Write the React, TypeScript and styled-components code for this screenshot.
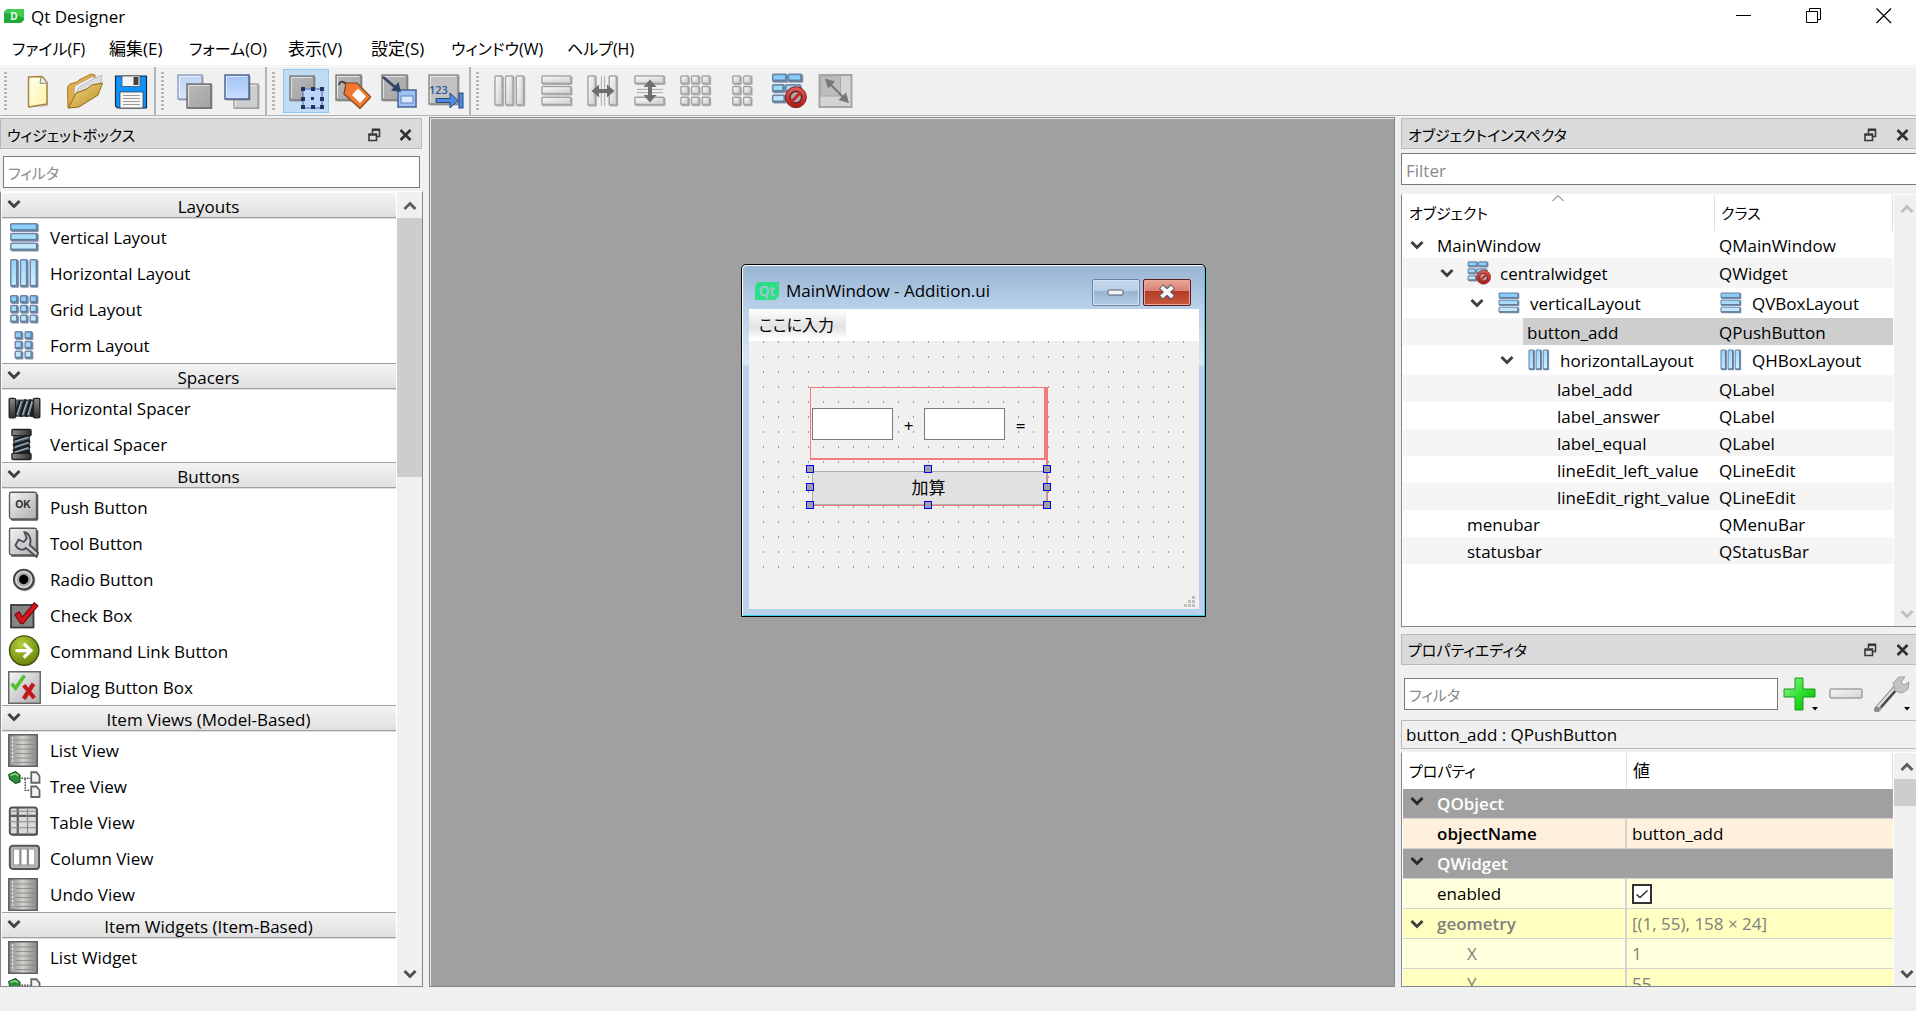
import React from 'react';
import styled, { createGlobalStyle, css } from 'styled-components';

const GlobalStyle = createGlobalStyle`
  *, *::before, *::after { box-sizing: border-box; }
  body { margin: 0; background: #f0f0f0; }
  body, button, input, table {
    font-family: "Open Sans", "Noto Sans CJK JP", sans-serif;
    font-size: 17px;
    line-height: 24px;
    font-feature-settings: "palt";
    color: #000;
  }
  button { border: 0; padding: 0; background: none; }
  ul { list-style: none; margin: 0; padding: 0; }
  svg { display: block; flex: none; }
`;

/* ---------- Shell ---------- */

const Page = styled.div`
  display: flex;
  flex-direction: column;
  height: 100vh;
  overflow: hidden;
`;

const TitleBar = styled.header`
  display: flex;
  align-items: center;
  height: 32px;
  padding: 0 24px 0 4px;
  background: #fff;
`;

const AppTitle = styled.h1`
  flex: 1;
  margin: 0 0 0 7px;
  padding-top: 2px;
  font-size: 17px;
  font-weight: 400;
`;

const WindowButtons = styled.div`
  display: flex;
  gap: 54px;
`;

const MenuBar = styled.nav`
  display: flex;
  height: 34px;
  padding: 1px 0 0 12px;
  gap: 26px;
  background: #fff;
  border-bottom: 1px solid #f0f0f0;
`;

const MenuItem = styled.button<{ $w: number; $kana?: boolean }>`
  width: ${p => p.$w}px;
  text-align: left;
  white-space: nowrap;
  font-size: ${p => (p.$kana ? 16 : 17)}px;
`;

const ToolBars = styled.div`
  display: flex;
  height: 50px;
  border-bottom: 1px solid #b4b4b4;
  border-top: 1px solid #fff;
`;

const ToolBar = styled.div<{ $last?: boolean }>`
  display: flex;
  align-items: center;
  padding-left: 4px;
  ${p => !p.$last && css`
    border-right: 2px solid #b4b4b4;
    margin-right: 1px;
  `}
`;

const Grip = styled.span`
  width: 3px;
  height: 39px;
  margin-right: 8px;
  background: repeating-linear-gradient(#b4b4b4 0 2px, transparent 2px 4px);
`;

const ToolRow = styled.div<{ $w: number }>`
  display: flex;
  justify-content: space-between;
  width: ${p => p.$w}px;
`;

const ToolButton = styled.button<{ $on?: boolean }>`
  display: grid;
  place-items: center;
  width: 46px;
  height: 44px;
  border: 1px solid ${p => (p.$on ? '#90c8f6' : 'transparent')};
  background: ${p => (p.$on ? '#c0dcf3' : 'transparent')};
`;

const Workspace = styled.main`
  flex: 1;
  min-height: 0;
  display: grid;
  grid-template-columns: 423px minmax(0, 1fr) 515px;
  gap: 6px;
  padding-top: 1px;
`;

const StatusBar = styled.footer`
  height: 24px;
`;

/* ---------- Docks ---------- */

const Dock = styled.section<{ $grow?: number }>`
  display: flex;
  flex-direction: column;
  min-height: 0;
  flex: ${p => p.$grow ?? 1} 1 0;
  padding-top: 1px;
`;

const RightColumn = styled.div`
  display: flex;
  flex-direction: column;
  gap: 6px;
  min-height: 0;
`;

const DockTitle = styled.div<{ $open?: boolean }>`
  display: flex;
  align-items: center;
  flex: none;
  height: 31px;
  padding: 0 ${p => (p.$open ? 7 : 9)}px 0 6px;
  margin-right: ${p => (p.$open ? 0 : 1)}px;
  border: 1px solid #b9b9b9;
  border-right-width: ${p => (p.$open ? 0 : 1)}px;
  background: #dadada;
`;

const DockName = styled.h2`
  flex: 1;
  margin: 0;
  padding-top: 2px;
  font-size: 15px;
  font-weight: 400;
`;

const DockButtons = styled.div<{ $gap: number }>`
  display: flex;
  gap: ${p => p.$gap}px;
  padding-top: 2px;
`;

const Filter = styled.input<{ $kana?: boolean }>`
  height: 32px;
  min-width: 0;
  flex: none;
  padding: 2px 4px 0;
  border: 1px solid #7a7a7a;
  border-radius: 0;
  outline: 0;
  background: #fff;
  font-size: ${p => (p.$kana ? 15 : 17)}px;
  &::placeholder { color: #8a8a8a; opacity: 1; }
`;

const WidgetFilter = styled(Filter)`
  margin: 7px 3px 3px;
`;

const ObjectFilter = styled(Filter)`
  margin: 4px 0 9px;
  border-right: 0;
`;

const Frame = styled.div<{ $open?: boolean }>`
  display: flex;
  flex: 1;
  min-height: 0;
  overflow: hidden;
  border: 1px solid #828790;
  border-top-color: #fff;
  border-right-width: ${p => (p.$open ? 0 : 1)}px;
  background: #fff;
`;

const FrameBody = styled.div`
  flex: 1;
  min-width: 0;
  min-height: 0;
  overflow: hidden;
  padding-left: 1px;
`;

const ScrollTrack = styled.div<{ $open?: boolean }>`
  display: flex;
  flex-direction: column;
  align-items: center;
  flex: none;
  width: 25px;
  margin-left: 1px;
  margin-right: ${p => (p.$open ? -3 : 0)}px;
  background: #f0f0f0;
`;

const ScrollButton = styled.button`
  display: grid;
  place-items: center;
  width: 100%;
  height: 26px;
  padding-top: 2px;
`;

const ScrollThumb = styled.div<{ $h: number }>`
  width: 100%;
  height: ${p => p.$h}px;
  background: #cdcdcd;
`;

const Spring = styled.div`
  flex: 1;
`;

/* ---------- Widget box ---------- */

const CategoryHead = styled.button`
  display: flex;
  align-items: flex-start;
  width: 100%;
  height: 26px;
  margin-bottom: 1px;
  padding: 2px 0 0 5px;
  border-top: 1px solid #a0a0a0;
  border-bottom: 1px solid #a0a0a0;
  box-shadow: 0 1px 0 #dedede;
  background: linear-gradient(#f4f4f4, #e0e0e0);
  svg { margin-top: 4px; }
  li:first-child > & { border-top-color: #fff; }
`;

const CategoryName = styled.span`
  flex: 1;
  text-align: center;
`;

const WidgetItem = styled.li`
  display: flex;
  align-items: center;
  gap: 9px;
  height: 36px;
  padding-left: 6px;
`;

const ItemName = styled.span`
  padding-top: 2px;
`;

/* ---------- Form editor ---------- */

const MdiArea = styled.section`
  position: relative;
  overflow: hidden;
  border: 1px solid #828790;
  background: #a0a0a0;
  box-shadow: inset 1px 1px 0 #e8e8e8;
`;

const FormWindow = styled.article`
  position: absolute;
  left: 311px;
  top: 146px;
  width: 465px;
  display: flex;
  flex-direction: column;
  padding: 0 6px 7px 7px;
  border: 1px solid #000;
  border-radius: 5px 5px 0 0;
  background: linear-gradient(#98b4d2 0, #b9d1ea 44px, #dae8f5 100px, #b9d1ea 101px);
  box-shadow: inset 1px 1px 0 #fff, inset -1px -1px 0 #35d0e8;
`;

const FormTitle = styled.div`
  display: flex;
  align-items: center;
  gap: 3px;
  height: 44px;
  padding: 8px 8px 0 6px;
`;

const FormName = styled.h3`
  flex: 1;
  margin: 0 0 0 4px;
  font-size: 17px;
  font-weight: 400;
`;

const CaptionButton = styled.button<{ $close?: boolean }>`
  display: grid;
  place-items: center;
  width: 48px;
  height: 27px;
  margin-top: 2px;
  border: 1px solid ${p => (p.$close ? '#5c1a22' : '#6a84a4')};
  border-radius: 2px;
  box-shadow: inset 0 0 0 1px ${p => (p.$close ? '#e9a99c' : '#d5e3f2')};
  background: ${p => (p.$close
    ? 'linear-gradient(#e8a598 0, #d98072 45%, #b53a25 46%, #c65a40 100%)'
    : 'linear-gradient(#c3d6ec 0, #b9cfe7 45%, #98b3d1 46%, #b4cbe4 100%)')};
`;

const FormMenu = styled.div`
  height: 32px;
  background: #fff;
`;

const TypeHere = styled.button`
  width: 97px;
  height: 30px;
  padding: 2px 2px 0 0;
  font-size: 16px;
  background: linear-gradient(#fff, #e2e2e2 60%, #fff);
`;

const FormBody = styled.div`
  height: 268px;
  position: relative;
  background: #f0f0f0;
`;

const DotGrid = styled.div`
  width: 449px;
  height: 240px;
  background:
    repeating-linear-gradient(90deg, #f0f0f0 0 14px, transparent 14px 15px),
    repeating-linear-gradient(#9a9a9a 0 2px, #f0f0f0 2px 15px);
`;

const OuterLayout = styled.div`
  position: absolute;
  left: 60px;
  top: 46px;
  width: 239px;
  height: 119px;
  border: 1px solid #f57a7a;
  border-left-color: transparent;
  border-right-width: 2px;
`;

const InnerLayout = styled.div`
  display: flex;
  align-items: center;
  height: 72px;
  padding: 4px 0 3px 1px;
  border: 1px solid #f57a7a;
  border-top: 0;
  border-right-width: 2px;
  border-bottom-width: 2px;
`;

const FormEdit = styled.input`
  width: 81px;
  height: 32px;
  border: 1px solid #7a7a7a;
  border-radius: 0;
  background: #fff;
`;

const FormLabel = styled.span`
  width: 31px;
  padding-top: 4px;
  text-align: center;
`;

const FormButton = styled.button`
  display: block;
  width: 235px;
  height: 34px;
  margin: 11px 0 0 2px;
  padding-right: 2px;
  border: 1px solid #adadad;
  background: #e1e1e1;
`;

const Handle = styled.i<{ $x: number; $y: number }>`
  position: absolute;
  left: ${p => p.$x}px;
  top: ${p => p.$y}px;
  width: 8px;
  height: 8px;
  border: 1px solid #0000f0;
  background: #a0a0a0;
`;

const SizeGrip = styled.div`
  position: absolute;
  right: 4px;
  bottom: 2px;
`;

/* ---------- Tables ---------- */

const Table = styled.table`
  width: 100%;
  table-layout: fixed;
  border-collapse: separate;
  border-spacing: 0;
  white-space: nowrap;
`;

const Col = styled.col<{ $w?: number }>`
  width: ${p => (p.$w ? `${p.$w}px` : 'auto')};
`;

const Th = styled.th<{ $kana?: boolean }>`
  position: relative;
  height: 36px;
  padding: 0 6px;
  text-align: left;
  font-weight: 400;
  font-size: ${p => (p.$kana ? 15 : 17)}px;
  border-right: 1px solid #e0e0e0;
`;

const SortMark = styled.span`
  position: absolute;
  left: 48%;
  top: 0;
`;

const ObjRow = styled.tr<{ $tall?: boolean; $alt?: boolean }>`
  height: ${p => (p.$tall ? 30 : 27)}px;
  background: ${p => (p.$alt ? '#f5f5f5' : '#fff')};
`;

const ObjCell = styled.td<{ $depth?: number }>`
  padding: 0 0 0 ${p => 4 + (p.$depth ?? 0) * 30}px;
`;

const ClassCell = styled.td`
  padding: 0;
`;

const CellInner = styled.div<{ $sel?: boolean; $lead?: number; $pad?: number }>`
  display: flex;
  align-items: center;
  height: 27px;
  margin-left: ${p => p.$lead ?? 0}px;
  padding-left: ${p => p.$pad ?? 0}px;
  background: ${p => (p.$sel ? '#cecece' : 'transparent')};
`;

const Expander = styled.button<{ $raised?: boolean }>`
  display: grid;
  place-items: center;
  width: 20px;
  height: 24px;
  margin-right: 10px;
  padding-bottom: ${p => (p.$raised ? 6 : 0)}px;
`;

const IconSlot = styled.span`
  margin-right: 9px;
`;

/* ---------- Property editor ---------- */

const PropTools = styled.div`
  display: flex;
  align-items: center;
  gap: 10px;
  padding: 11px 6px 8px 3px;
`;

const PropFilter = styled(Filter)`
  flex: 1;
  margin-right: -6px;
`;

const PropButton = styled.button`
  width: 36px;
  height: 36px;
`;

const ObjectLabel = styled.div`
  flex: none;
  height: 29px;
  margin-bottom: 3px;
  padding: 2px 4px;
  border: 1px solid #b9b9b9;
  border-right: 0;
`;

const PropRow = styled.tr<{ $bg: string }>`
  background: ${p => p.$bg};
`;

const PropCell = styled.td<{ $indent?: number; $bold?: boolean; $dim?: boolean; $group?: boolean; $value?: boolean }>`
  height: 30px;
  padding: 2px 0 0 ${p => (p.$indent ?? (p.$value ? 5 : 4))}px;
  font-weight: ${p => (p.$bold || p.$group ? 600 : 400)};
  color: ${p => (p.$group ? '#fff' : p.$dim ? '#808080' : '#000')};
  border-bottom: 1px solid #d4d4d4;
  border-right: ${p => (p.$group || p.$value ? 0 : 2)}px solid #d4d4d4;
`;

const PropInner = styled.div`
  display: flex;
  align-items: center;
`;

const Check = styled.input`
  appearance: none;
  display: block;
  width: 20px;
  height: 20px;
  margin: 0;
  border: 2px solid #333;
  background: #fff;
`;

const CheckWrap = styled.label`
  position: relative;
  display: block;
  width: 20px;
`;

const CheckMark = styled.span`
  position: absolute;
  left: 3px;
  top: 3px;
`;

/* ---------- Drawings ---------- */

const DefsSvg = styled.svg`
  position: absolute;
`;

const Defs = () => (
  <DefsSvg width="0" height="0" aria-hidden="true">
    <defs>
      <linearGradient id="sky" gradientUnits="userSpaceOnUse" x1="0" y1="0" x2="0" y2="22">
        <stop offset="0" stopColor="#7cc6f6" /><stop offset="1" stopColor="#d8f1ff" />
      </linearGradient>
      <linearGradient id="skyX" gradientUnits="userSpaceOnUse" x1="4" y1="0" x2="16" y2="22">
        <stop offset="0" stopColor="#8fd2fb" /><stop offset="1" stopColor="#d8f1ff" />
      </linearGradient>
      <linearGradient id="ash" x1="0" y1="0" x2="1" y2="1">
        <stop offset="0" stopColor="#f8f8f8" /><stop offset="1" stopColor="#d2d2d2" />
      </linearGradient>
      <linearGradient id="slab" x1="0" y1="0" x2="1" y2="1">
        <stop offset="0" stopColor="#b8b8b8" /><stop offset="1" stopColor="#a4a4a4" />
      </linearGradient>
      <linearGradient id="silver" x1="0" y1="0" x2="1" y2="1">
        <stop offset="0" stopColor="#f5f5f5" /><stop offset="1" stopColor="#adadad" />
      </linearGradient>
      <linearGradient id="blue" x1="0" y1="0" x2="0" y2="1">
        <stop offset="0" stopColor="#a3c4f8" /><stop offset="1" stopColor="#c9dcfc" />
      </linearGradient>
      <linearGradient id="paleBlue" x1="0" y1="0" x2="0" y2="1">
        <stop offset="0" stopColor="#bfd3f3" /><stop offset="1" stopColor="#d6e4fa" />
      </linearGradient>
      <linearGradient id="paper" x1="0" y1="0" x2="1" y2="1">
        <stop offset="0" stopColor="#fffef2" /><stop offset="1" stopColor="#fdf3a2" />
      </linearGradient>
      <linearGradient id="gold" x1="0" y1="0" x2="1" y2="1">
        <stop offset="0" stopColor="#f5dc8c" /><stop offset="1" stopColor="#b88a1c" />
      </linearGradient>
      <linearGradient id="red" x1="0" y1="0" x2="0" y2="1">
        <stop offset="0" stopColor="#e0625c" /><stop offset="1" stopColor="#b01510" />
      </linearGradient>
      <linearGradient id="list" x1="0" y1="0" x2="1" y2="0">
        <stop offset="0" stopColor="#8a8a8a" /><stop offset="0.5" stopColor="#d0d0cc" /><stop offset="1" stopColor="#858585" />
      </linearGradient>
      <linearGradient id="plus" x1="0" y1="0" x2="1" y2="1">
        <stop offset="0" stopColor="#9cf59c" /><stop offset="0.5" stopColor="#2fe02f" /><stop offset="1" stopColor="#04b804" />
      </linearGradient>
      <radialGradient id="lime" cx="0.4" cy="0.3" r="0.8">
        <stop offset="0" stopColor="#b4cf3a" /><stop offset="1" stopColor="#5f7d05" />
      </radialGradient>
      <linearGradient id="metal" x1="0" y1="0" x2="0" y2="1">
        <stop offset="0" stopColor="#8c8c8c" /><stop offset="1" stopColor="#303030" />
      </linearGradient>
    </defs>
  </DefsSvg>
);

type Box = [number, number, number, number];
const T = [1.8, 8.3, 14.8];
const rows: Box[] = T.map(y => [1.8, y, 17.8, 4.6]);
const cols: Box[] = T.map(x => [x, 1.8, 4.6, 17.8]);
const cells: Box[] = T.flatMap(y => T.map(x => [x, y, 4.6, 4.6] as Box));
const pairs: Box[] = T.flatMap(y => [4.8, 11.4].map(x => [x, y, 4.6, 4.6] as Box));
const bricks: Box[] = [[1, 0.8, 8.6, 4.2], [10.6, 0.8, 8.2, 4.2], [1, 7.2, 7, 4.2], [9, 7.2, 9, 4.2], [1, 13.6, 7.6, 4.2]];

const Blocks = ({ at, gray, wide }: { at: Box[]; gray?: boolean; wide?: boolean }) => (
  <>
    {at.map(([x, y, w, h]) => (
      <g key={`${x}-${y}`}>
        <rect x={x + 0.3} y={y + 0.3} width={w + 0.6} height={h + 0.6} rx="0.6" fill={gray ? '#b4b4b4' : '#8594a8'} />
        <rect x={x} y={y} width={w} height={h} rx="0.6" fill={gray ? '#cccccc' : '#557b9a'} stroke={gray ? '#a2a2a2' : '#6f86a6'} strokeWidth="0.9" />
        <rect x={x + 0.5} y={y + 0.5} width={w - 1.5} height={h - 1.5} fill={gray ? 'url(#ash)' : wide ? 'url(#skyX)' : 'url(#sky)'} />
      </g>
    ))}
  </>
);

const NoEntry = ({ cx, cy, r }: { cx: number; cy: number; r: number }) => (
  <g>
    <circle cx={cx} cy={cy} r={r} fill="url(#red)" stroke="#7c1c1c" strokeWidth="0.6" />
    <circle cx={cx} cy={cy} r={r * 0.55} fill="#b5a3a6" stroke="#6a2a2e" strokeWidth={r * 0.16} />
    <path d={`M${cx - r * 0.45} ${cy + r * 0.45}L${cx + r * 0.45} ${cy - r * 0.45}`} stroke="#c22a25" strokeWidth={r * 0.28} />
  </g>
);

const Slab = ({ x, y, s, fill = 'url(#slab)', edge = '#7d7d7d' }: { x: number; y: number; s: number; fill?: string; edge?: string }) => (
  <g>
    <rect x={x + 0.8} y={y + 0.8} width={s + 0.6} height={s + 0.6} fill="#505050" opacity="0.55" />
    <rect x={x} y={y} width={s} height={s} fill={fill} stroke={edge} strokeWidth="1.4" />
    <path d={`M${x + 1.5} ${y + s - 2}V${y + 1.5}H${x + s - 2}`} fill="none" stroke="#fff" opacity="0.6" />
  </g>
);

const Springy = () => (
  <g>
    <rect x="4" y="5" width="14" height="11.500" fill="#5b6166" />
    <path d="M5 16L8.500 5.500M8.500 16.500L12 5M12 16.500L15.500 5M15.500 16.500L17.500 9" fill="none" stroke="#1c1c1c" strokeWidth="2.600" />
    <path d="M6 15.500L9 6M9.600 15.500L12.800 6M13.200 15.500L16.200 6" stroke="#8fb4cb" strokeWidth="1" />
    <rect x="0.8" y="4.200" width="4.200" height="13" rx="0.8" fill="url(#metal)" stroke="#222" strokeWidth="0.9" />
    <rect x="17" y="4.200" width="4.200" height="13" rx="0.8" fill="url(#metal)" stroke="#222" strokeWidth="0.9" />
  </g>
);

const ListArt = () => (
  <g>
    <rect x="0.5" y="0.5" width="19" height="21" fill="url(#list)" stroke="#606060" />
    <path d="M5 4H17M5 7H17M5 10H17M5 13H17M5 16H17M5 19H17" stroke="#808080" strokeWidth="0.8" opacity="0.75" />
    <path d="M3 2V20" stroke="#e4e4e4" strokeWidth="1" strokeDasharray="1.5 1" />
  </g>
);

const Art: Record<string, React.ReactNode> = {
  vlayout: <Blocks at={rows} />,
  hlayout: <Blocks at={cols} wide />,
  grid: <Blocks at={cells} />,
  form: <Blocks at={pairs} />,
  hlayoutGray: <Blocks at={cols} gray />,
  vlayoutGray: <Blocks at={rows} gray />,
  gridGray: <Blocks at={cells} gray />,
  formGray: <Blocks at={pairs} gray />,
  hsplit: (
    <>
      <Blocks at={[cols[0], cols[2]]} gray />
      <path d="M10 2V20M12 2V20" stroke="#a8a8a8" strokeWidth="0.6" />
      <path d="M4 11L8.600 7V9.800H13.400V7L18 11L13.400 15V12.200H8.600V15Z" fill="#6e6e6e" />
    </>
  ),
  vsplit: (
    <>
      <Blocks at={[rows[0], rows[2]]} gray />
      <path d="M3 10H19M3 12H19" stroke="#a8a8a8" strokeWidth="0.6" />
      <path d="M11 4L15 8.600H12.200V13.400H15L11 18L7 13.400H9.800V8.600H7Z" fill="#6e6e6e" />
    </>
  ),
  breakLayout: (<><Blocks at={bricks} /><NoEntry cx={15.2} cy={14.8} r={6.4} /></>),
  hspacer: <Springy />,
  vspacer: <g transform="matrix(0 0.98 0.98 0 -1.5 0.2)"><Springy /></g>,
  push: (
    <>
      <rect x="1.800" y="1.800" width="18.400" height="18" rx="1.200" fill="#555" />
      <rect x="1" y="0.8" width="18" height="17.800" rx="1.200" fill="url(#silver)" stroke="#5a5a5a" strokeWidth="0.9" />
      <text x="10" y="11.500" textAnchor="middle" fontSize="7" fontWeight="700" fontFamily="Inter, sans-serif" fill="#333">OK</text>
    </>
  ),
  tool: (
    <>
      <rect x="1.800" y="1.800" width="18.400" height="18" rx="1.200" fill="#555" />
      <rect x="1" y="0.8" width="18" height="17.800" rx="1.200" fill="url(#silver)" stroke="#5a5a5a" strokeWidth="0.9" />
      <path d="M5 12C6 15 10 16 12 14L19 20L20 17L14.500 12C16 8 14 4 11 3.500L12.500 7.500L10.500 10L7 8.500Z" fill="#c9cbd2" stroke="#4b4b52" strokeWidth="1.200" />
    </>
  ),
  radio: (
    <>
      <circle cx="11.200" cy="11.800" r="7" fill="#999" />
      <circle cx="10.500" cy="11" r="6.600" fill="#a8a8a8" stroke="#444" strokeWidth="1.200" />
      <circle cx="10.500" cy="11" r="5.200" fill="none" stroke="#d8d8d8" strokeWidth="1" />
      <circle cx="10.500" cy="11" r="3.100" fill="#000" />
    </>
  ),
  check: (
    <>
      <rect x="2" y="4" width="15" height="15" fill="#858585" stroke="#3a3a3a" strokeWidth="1.200" />
      <path d="M4.500 10.500L7.500 8.500L9.500 12L17.500 2.500L20 4.500L10 16.500H8.500Z" fill="#d4151c" stroke="#6e0a0a" strokeWidth="0.7" />
    </>
  ),
  command: (
    <>
      <circle cx="10.800" cy="10.400" r="9.800" fill="url(#lime)" stroke="#3f4e0c" strokeWidth="0.9" />
      <path d="M5 10.400H15M10.500 5.800L15.300 10.400L10.500 15" fill="none" stroke="#fff" strokeWidth="2.100" />
    </>
  ),
  dialog: (
    <>
      <rect x="0.5" y="0.5" width="21" height="21" fill="url(#silver)" stroke="#666" />
      <path d="M2.500 8.500L5 11.500L11 3" fill="none" stroke="#54c030" strokeWidth="2.400" />
      <path d="M10.500 9.500L17.500 18M17 8.500L10.500 18.500" stroke="#c5161d" strokeWidth="2.800" />
    </>
  ),
  list: <ListArt />,
  tree: (
    <>
      <path d="M0.500 3L5 1L8 3.500V8L5 9L1 6Z" fill="#2d8c36" stroke="#174c1b" strokeWidth="0.7" />
      <path d="M1.500 3.500L5 2.500L7 4" stroke="#8fe090" fill="none" />
      <path d="M9 5.500H15M11.500 6V13.500H15" stroke="#444" strokeWidth="1" strokeDasharray="1 0.8" fill="none" />
      <path d="M15.500 1.500H19L21 4V8.500H15.500ZM15.500 11H19L21 13.500V18H15.500Z" fill="#f2f2f2" stroke="#666" strokeWidth="1.200" />
    </>
  ),
  table: (
    <>
      <rect x="2" y="1.800" width="18" height="18" rx="1.500" fill="#666" />
      <rect x="1.200" y="1" width="18" height="18" rx="1.500" fill="#d9d9d9" stroke="#505050" strokeWidth="1.300" />
      <path d="M6.500 1V19M1 6.500H19" stroke="#606060" strokeWidth="1.500" />
      <path d="M13 1V19M1 10.500H19M1 14.500H19M1 3.500H19" stroke="#888" strokeWidth="0.8" />
    </>
  ),
  column: (
    <>
      <rect x="1.200" y="2.500" width="19.500" height="15.500" rx="2" fill="#b4b4b4" stroke="#555" strokeWidth="1.300" />
      <rect x="3.500" y="4.500" width="14.500" height="11" fill="#8c8c8c" />
      <path d="M4 5H7.500V15H4ZM9 5H12.500V15H9ZM14 5H17.500V15H14Z" fill="#fff" />
    </>
  ),
};

const Icon = ({ name, size }: { name: string; size: number }) => (
  <svg width={size} height={size} viewBox="0 0 22 22" aria-hidden="true">{Art[name]}</svg>
);

const Tool36: Record<string, React.ReactNode> = {
  file: (
    <>
      <path d="M9.500 4L23 3.500L28 9.500V33L9 34.500Z" fill="#777" opacity="0.4" />
      <path d="M8.500 4L22 3.500L27 9.500V31L8.500 34Z" fill="url(#paper)" stroke="#a98445" strokeWidth="1.500" strokeLinejoin="round" />
      <path d="M21 4L20 10.500L27 10" fill="#eee" stroke="#8a8a8a" />
    </>
  ),
  folder: (
    <>
      <path d="M0.500 14L3 11L10 9L12 7L24 1L28 2V12L6 34L1 35Z" fill="#e0ac4c" stroke="#a37a2a" />
      <path d="M7 21L8 13L25 4L32 5L33 12Z" fill="#f3f3f3" stroke="#aaa" strokeWidth="0.7" />
      <path d="M9 21L12 14L28 5L35 2L34 10Z" fill="#dcdcdc" stroke="#aaa" strokeWidth="0.7" />
      <path d="M1.500 35L9 20L20 16L25 12L35.500 10L31 22L12 34Z" fill="url(#gold)" stroke="#8f6a1c" />
    </>
  ),
  save: (
    <>
      <path d="M2.500 3H33.500V35H4.500L2.500 33Z" fill="#0d93ff" stroke="#1d2836" strokeWidth="1.200" />
      <rect x="9" y="3" width="18" height="10.500" fill="#f4f4f4" stroke="#444" strokeWidth="0.7" />
      <rect x="20.500" y="4" width="5" height="8" fill="#4a3f3c" />
      <rect x="7" y="19" width="23" height="16" fill="#f7f7f7" stroke="#333" strokeWidth="0.7" />
      <path d="M10 22.500H27M10 25.500H27M10 28.500H27M10 31.500H27" stroke="#999" strokeWidth="1.200" />
    </>
  ),
  back: (<><Slab x={1} y={2} s={24} fill="url(#paleBlue)" edge="#8da0c0" /><Slab x={10} y={11} s={24} fill="url(#slab)" edge="#6a6a6a" /></>),
  front: (<><Slab x={10} y={11} s={24} fill="#cfcfcf" edge="#a2a2a2" /><Slab x={1} y={2} s={24} fill="url(#blue)" edge="#4a608c" /></>),
  widgets: (
    <>
      <Slab x={2} y={3} s={24} />
      <rect x="15" y="16" width="19" height="19" fill="#bcd6fb" stroke="#6c8cc4" strokeWidth="1.500" />
      {[13, 23, 32].map(x => [14, 24, 32].map(y => (
        <rect key={`${x}${y}`} x={x} y={y} width={x === 23 && y === 24 ? 3 : 4} height={x === 23 && y === 24 ? 3 : 4} fill="#21335c" />
      )))}
    </>
  ),
  buddies: (
    <>
      <Slab x={1} y={2} s={25} />
      <path d="M4 12C5 7 9 8 13 13" fill="none" stroke="#444" strokeWidth="1.800" />
      <path d="M11 10L22 10L36 24L25 35.500L9 21Z" fill="#f07830" stroke="#7a4526" strokeWidth="1.200" />
      <path d="M23 15.500L31 23.500L25 30L17 22Z" fill="#fff" />
    </>
  ),
  signals: (
    <>
      <Slab x={1} y={2} s={25} />
      <rect x="17" y="17" width="18" height="17" fill="#9fc0f5" stroke="#4a6290" strokeWidth="1.500" />
      <rect x="20" y="23" width="12" height="7" fill="#dbe8fc" stroke="#6383bb" />
      <path d="M2 4L15 15" stroke="#2f4563" strokeWidth="2.600" />
      <path d="M20 19L10 17.500L17.500 9Z" fill="#2f4563" />
    </>
  ),
  tabs: (
    <>
      <Slab x={1} y={2} s={29} fill="#c2c2c2" edge="#8b8b8b" />
      <text x="1" y="21" fontSize="11" fontFamily="Open Sans, sans-serif" fontWeight="600" fill="#2c5a9e">123</text>
      <path d="M8 25.500H22V20L30 27.500L22 35V29.500H8Z" fill="#4d8ae0" stroke="#27477c" />
      <rect x="31" y="20" width="4" height="15" fill="#4d8ae0" stroke="#27477c" />
    </>
  ),
  adjust: (
    <>
      <rect x="1.500" y="2" width="32" height="32" fill="#d4d4d4" stroke="#a5a5a5" strokeWidth="2" />
      <rect x="2.500" y="3" width="20" height="20" fill="#bcbcbc" stroke="#a8a8a8" />
      <path d="M10 9L27 26" stroke="#777" strokeWidth="2.200" />
      <path d="M7 5.500L17 8.500L10 15.500ZM31 30L20.500 27L28 19.500Z" fill="#777" />
    </>
  ),
};

const BigIcon = ({ name }: { name: string }) => (
  <svg width="36" height="36" viewBox="0 0 36 36" aria-hidden="true">{Tool36[name]}</svg>
);

const Chevron = ({ color = '#404040', up }: { color?: string; up?: boolean }) => (
  <svg width="14" height="10" viewBox="0 0 14 10" aria-hidden="true">
    <path d={up ? 'M1.500 8L7 2.500L12.500 8' : 'M1.500 2L7 7.500L12.500 2'} fill="none" stroke={color} strokeWidth="3" />
  </svg>
);

const FloatIcon = () => (
  <svg width="13" height="14" viewBox="0 0 13 14" aria-hidden="true">
    <path d="M4.500 5V1.500H11.500V8.500H9" fill="none" stroke="#3a3a3a" strokeWidth="1.600" />
    <path d="M4 1.800H12" stroke="#3a3a3a" strokeWidth="2.400" />
    <path d="M1 6.500H8.500V12.500H1Z" fill="#dadada" stroke="#3a3a3a" strokeWidth="1.600" />
    <path d="M0.500 6.500H9" stroke="#3a3a3a" strokeWidth="2.400" />
  </svg>
);

const CloseIcon = () => (
  <svg width="13" height="14" viewBox="0 0 13 14" aria-hidden="true">
    <path d="M1.500 2L11.500 12M11.500 2L1.500 12" stroke="#303030" strokeWidth="2.600" />
  </svg>
);

/* ---------- Data ---------- */

const menus = [
  { label: 'ファイル(F)', w: 71, kana: true },
  { label: '編集(E)', w: 54 },
  { label: 'フォーム(O)', w: 73, kana: true },
  { label: '表示(V)', w: 57 },
  { label: '設定(S)', w: 54 },
  { label: 'ウィンドウ(W)', w: 90, kana: true },
  { label: 'ヘルプ(H)', w: 66, kana: true },
];

const categories = [
  { name: 'Layouts', items: [['vlayout', 'Vertical Layout'], ['hlayout', 'Horizontal Layout'], ['grid', 'Grid Layout'], ['form', 'Form Layout']] },
  { name: 'Spacers', items: [['hspacer', 'Horizontal Spacer'], ['vspacer', 'Vertical Spacer']] },
  { name: 'Buttons', items: [['push', 'Push Button'], ['tool', 'Tool Button'], ['radio', 'Radio Button'], ['check', 'Check Box'], ['command', 'Command Link Button'], ['dialog', 'Dialog Button Box']] },
  { name: 'Item Views (Model-Based)', items: [['list', 'List View'], ['tree', 'Tree View'], ['table', 'Table View'], ['column', 'Column View'], ['list', 'Undo View']] },
  { name: 'Item Widgets (Item-Based)', items: [['list', 'List Widget'], ['tree', '']] },
];

type Obj = { name: string; cls: string; depth: number; open?: boolean; icon?: string; clsIcon?: string; sel?: boolean };
const objects: Obj[] = [
  { name: 'MainWindow', cls: 'QMainWindow', depth: 0, open: true },
  { name: 'centralwidget', cls: 'QWidget', depth: 1, open: true, icon: 'breakLayout' },
  { name: 'verticalLayout', cls: 'QVBoxLayout', depth: 2, open: true, icon: 'vlayout', clsIcon: 'vlayout' },
  { name: 'button_add', cls: 'QPushButton', depth: 3, sel: true },
  { name: 'horizontalLayout', cls: 'QHBoxLayout', depth: 3, open: true, icon: 'hlayout', clsIcon: 'hlayout' },
  { name: 'label_add', cls: 'QLabel', depth: 4 },
  { name: 'label_answer', cls: 'QLabel', depth: 4 },
  { name: 'label_equal', cls: 'QLabel', depth: 4 },
  { name: 'lineEdit_left_value', cls: 'QLineEdit', depth: 4 },
  { name: 'lineEdit_right_value', cls: 'QLineEdit', depth: 4 },
  { name: 'menubar', cls: 'QMenuBar', depth: 1 },
  { name: 'statusbar', cls: 'QStatusBar', depth: 1 },
];

/* ---------- Parts ---------- */

const DockHeader = ({ title, open }: { title: string; open?: boolean }) => (
  <DockTitle $open={open}>
    <DockName>{title}</DockName>
    <DockButtons $gap={open ? 19 : 18}>
      <button aria-label="フロート"><FloatIcon /></button>
      <button aria-label="閉じる"><CloseIcon /></button>
    </DockButtons>
  </DockTitle>
);

const Scroll = ({ thumb, off, open }: { thumb?: number; off?: boolean; open?: boolean }) => (
  <ScrollTrack $open={open}>
    <ScrollButton aria-label="上へ"><Chevron up color={off ? '#c0c0c0' : '#606060'} /></ScrollButton>
    {thumb ? <ScrollThumb $h={thumb} /> : null}
    <Spring />
    <ScrollButton aria-label="下へ"><Chevron color={off ? '#c0c0c0' : '#505050'} /></ScrollButton>
  </ScrollTrack>
);

const Tools = ({ w, children, last }: { w: number; children: React.ReactNode; last?: boolean }) => (
  <ToolBar role="toolbar" $last={last}>
    <Grip />
    <ToolRow $w={w}>{children}</ToolRow>
  </ToolBar>
);

const GroupRow = ({ name }: { name: string }) => (
  <PropRow $bg="#a0a0a0">
    <PropCell colSpan={2} $group>
      <PropInner>
        <Expander $raised aria-label={name}><Chevron color="#2a2a2a" /></Expander>{name}
      </PropInner>
    </PropCell>
  </PropRow>
);

export default function App() {
  return (
    <Page>
      <GlobalStyle />
      <Defs />
      <TitleBar>
        <svg width="20" height="16" viewBox="0 0 20 16" aria-hidden="true">
          <path d="M3 1H20V12L17 15H0V4Z" fill="#21a83a" />
          <path d="M3 1H20V10L10 6L0 5V4Z" fill="#41cd52" />
          <text x="10" y="12" textAnchor="middle" fontSize="10" fontWeight="700" fontFamily="Open Sans, sans-serif" fill="#e6ffe8">D</text>
        </svg>
        <AppTitle>Qt Designer</AppTitle>
        <WindowButtons>
          <button aria-label="最小化"><svg width="16" height="16"><path d="M0 7.500H15" stroke="#000" /></svg></button>
          <button aria-label="元に戻す"><svg width="16" height="16"><path d="M0.500 3.500H11.500V14.500H0.500ZM3.500 3.500V0.500H14.500V11.500H11.500" fill="none" stroke="#000" /></svg></button>
          <button aria-label="閉じる"><svg width="16" height="16"><path d="M0.500 0.500L15 15M15 0.500L0.500 15" stroke="#000" strokeWidth="1.200" /></svg></button>
        </WindowButtons>
      </TitleBar>
      <MenuBar>
        {menus.map(m => <MenuItem key={m.label} $w={m.w} $kana={m.kana}>{m.label}</MenuItem>)}
      </MenuBar>
      <ToolBars>
        <Tools w={139}>
          <ToolButton aria-label="新規"><BigIcon name="file" /></ToolButton>
          <ToolButton aria-label="開く"><BigIcon name="folder" /></ToolButton>
          <ToolButton aria-label="保存"><BigIcon name="save" /></ToolButton>
        </Tools>
        <Tools w={93}>
          <ToolButton aria-label="背面へ"><BigIcon name="back" /></ToolButton>
          <ToolButton aria-label="前面へ"><BigIcon name="front" /></ToolButton>
        </Tools>
        <Tools w={186}>
          <ToolButton $on aria-label="ウィジェットを編集"><BigIcon name="widgets" /></ToolButton>
          <ToolButton aria-label="バディを編集"><BigIcon name="buddies" /></ToolButton>
          <ToolButton aria-label="シグナルを編集"><BigIcon name="signals" /></ToolButton>
          <ToolButton aria-label="タブ順序を編集"><BigIcon name="tabs" /></ToolButton>
        </Tools>
        <Tools w={372} last>
          <ToolButton aria-label="水平"><Icon name="hlayoutGray" size={36} /></ToolButton>
          <ToolButton aria-label="垂直"><Icon name="vlayoutGray" size={36} /></ToolButton>
          <ToolButton aria-label="水平スプリッタ"><Icon name="hsplit" size={36} /></ToolButton>
          <ToolButton aria-label="垂直スプリッタ"><Icon name="vsplit" size={36} /></ToolButton>
          <ToolButton aria-label="格子"><Icon name="gridGray" size={36} /></ToolButton>
          <ToolButton aria-label="フォーム"><Icon name="formGray" size={36} /></ToolButton>
          <ToolButton aria-label="レイアウト解除"><Icon name="breakLayout" size={36} /></ToolButton>
          <ToolButton aria-label="サイズ調整"><BigIcon name="adjust" /></ToolButton>
        </Tools>
      </ToolBars>

      <Workspace>
        <Dock>
          <DockHeader title="ウィジェットボックス" />
          <WidgetFilter $kana placeholder="フィルタ" aria-label="ウィジェットのフィルタ" />
          <Frame>
            <FrameBody>
              <ul>
                {categories.map(c => (
                  <li key={c.name}>
                    <CategoryHead><Chevron /><CategoryName>{c.name}</CategoryName></CategoryHead>
                    <ul>
                      {c.items.map(([icon, label]) => (
                        <WidgetItem key={label}><Icon name={icon} size={33} /><ItemName>{label}</ItemName></WidgetItem>
                      ))}
                    </ul>
                  </li>
                ))}
              </ul>
            </FrameBody>
            <Scroll thumb={259} />
          </Frame>
        </Dock>

        <MdiArea>
          <FormWindow>
            <FormTitle>
              <svg width="24" height="18" viewBox="0 0 24 18" aria-hidden="true">
                <path d="M3 0H24V14L20 18H0V4Z" fill="#2cde85" />
                <text x="12" y="14" textAnchor="middle" fontSize="14" fontWeight="600" fontFamily="Open Sans, sans-serif" fill="#a8c4dc">Qt</text>
              </svg>
              <FormName>MainWindow - Addition.ui</FormName>
              <CaptionButton aria-label="最小化">
                <svg width="18" height="8"><rect x="1" y="2" width="15" height="5" rx="1" fill="#f4f4f4" stroke="#555f70" /></svg>
              </CaptionButton>
              <CaptionButton $close aria-label="閉じる">
                <svg width="18" height="16" viewBox="0 0 18 16">
                  <path d="M3 2.500L15 13.500M15 2.500L3 13.500" stroke="#50545c" strokeWidth="6" />
                  <path d="M3.500 3L14.500 13M14.500 3L3.500 13" stroke="#f6f6f6" strokeWidth="4" />
                </svg>
              </CaptionButton>
            </FormTitle>
            <FormMenu><TypeHere>ここに入力</TypeHere></FormMenu>
            <FormBody>
              <DotGrid />
              <OuterLayout>
                <InnerLayout>
                  <FormEdit aria-label="左の値" />
                  <FormLabel>+</FormLabel>
                  <FormEdit aria-label="右の値" />
                  <FormLabel>=</FormLabel>
                </InnerLayout>
                <FormButton>加算</FormButton>
              </OuterLayout>
              {[57, 175, 294].flatMap(x => [124, 142, 160].map(y => (
                x === 175 && y === 142 ? null : <Handle key={`${x}-${y}`} $x={x} $y={y} />
              )))}
              <SizeGrip>
                <svg width="11" height="11"><path d="M8 0h3v3h-3zM8 4h3v3h-3zM4 4h3v3h-3zM8 8h3v3h-3zM4 8h3v3h-3zM0 8h3v3h-3z" fill="#bfbfbf" /></svg>
              </SizeGrip>
            </FormBody>
          </FormWindow>
        </MdiArea>

        <RightColumn>
          <Dock $grow={510}>
            <DockHeader title="オブジェクトインスペクタ" open />
            <ObjectFilter placeholder="Filter" aria-label="オブジェクトのフィルタ" />
            <Frame $open>
              <FrameBody>
                <Table>
                  <colgroup><Col $w={312} /><Col /></colgroup>
                  <thead>
                    <tr>
                      <Th $kana>オブジェクト
                        <SortMark><svg width="12" height="7"><path d="M0.500 6L6 0.500L11.500 6" fill="none" stroke="#606060" /></svg></SortMark>
                      </Th>
                      <Th $kana>クラス</Th>
                    </tr>
                  </thead>
                  <tbody>
                    {objects.map((o, i) => (
                      <ObjRow key={o.name} $alt={i % 2 === 1} $tall={!!o.icon}>
                        <ObjCell $depth={o.depth}>
                          <CellInner $sel={o.sel} $lead={o.open ? 0 : 26} $pad={o.open ? 0 : 4}>
                            {o.open && <Expander aria-label={o.name}><Chevron /></Expander>}
                            {o.icon && <IconSlot><Icon name={o.icon} size={24} /></IconSlot>}
                            <ItemName>{o.name}</ItemName>
                          </CellInner>
                        </ObjCell>
                        <ClassCell>
                          <CellInner $sel={o.sel} $pad={4}>
                            {o.clsIcon && <IconSlot><Icon name={o.clsIcon} size={24} /></IconSlot>}
                            <ItemName>{o.cls}</ItemName>
                          </CellInner>
                        </ClassCell>
                      </ObjRow>
                    ))}
                  </tbody>
                </Table>
              </FrameBody>
              <Scroll off open />
            </Frame>
          </Dock>

          <Dock $grow={354}>
            <DockHeader title="プロパティエディタ" open />
            <PropTools>
              <PropFilter $kana placeholder="フィルタ" aria-label="プロパティのフィルタ" />
              <PropButton aria-label="追加">
                <svg width="36" height="36"><path d="M13 2H21V13H33V21H21V34H13V21H2V13H13Z" fill="url(#plus)" stroke="#1a9a1a" strokeLinejoin="round" /><path d="M30 31H36L33 34.500Z" /></svg>
              </PropButton>
              <PropButton aria-label="削除">
                <svg width="36" height="36"><rect x="2" y="13" width="32" height="9" rx="1.500" fill="url(#ash)" stroke="#a0a0a0" strokeWidth="1.500" /></svg>
              </PropButton>
              <PropButton aria-label="設定">
                <svg width="36" height="36">
                  <path d="M3 33.500L21 13" stroke="#8b8b8b" strokeWidth="6" strokeLinecap="round" />
                  <path d="M4 31L21 12" stroke="#e2e2e2" strokeWidth="2.500" />
                  <path d="M7 31L22 14" stroke="#484848" strokeWidth="2" />
                  <path d="M19 7L25 1L31 1L27 6L30 9L35 6L34 13L28 17L21 15Z" fill="#c4c4c4" stroke="#a0a0a0" />
                  <path d="M30 31H36L33 34.500Z" />
                </svg>
              </PropButton>
            </PropTools>
            <ObjectLabel>button_add : QPushButton</ObjectLabel>
            <Frame $open>
              <FrameBody>
                <Table>
                  <colgroup><Col $w={224} /><Col /></colgroup>
                  <thead><tr><Th $kana>プロパティ</Th><Th>値</Th></tr></thead>
                  <tbody>
                    <GroupRow name="QObject" />
                    <PropRow $bg="#fff0de">
                      <PropCell $indent={34} $bold>objectName</PropCell><PropCell $value>button_add</PropCell>
                    </PropRow>
                    <GroupRow name="QWidget" />
                    <PropRow $bg="#ffffdc">
                      <PropCell $indent={34}>enabled</PropCell>
                      <PropCell $value>
                        <CheckWrap>
                          <Check type="checkbox" defaultChecked aria-label="enabled" />
                          <CheckMark><svg width="14" height="14"><path d="M1.500 7.500L5 10.500L12.500 3.500" fill="none" stroke="#333" strokeWidth="1.600" /></svg></CheckMark>
                        </CheckWrap>
                      </PropCell>
                    </PropRow>
                    <PropRow $bg="#ffffbf">
                      <PropCell $bold $dim><PropInner><Expander aria-label="geometry"><Chevron /></Expander>geometry</PropInner></PropCell>
                      <PropCell $value $dim>[(1, 55), 158 × 24]</PropCell>
                    </PropRow>
                    <PropRow $bg="#ffffdc"><PropCell $indent={64} $dim>X</PropCell><PropCell $value $dim>1</PropCell></PropRow>
                    <PropRow $bg="#ffffbf"><PropCell $indent={64} $dim>Y</PropCell><PropCell $value $dim>55</PropCell></PropRow>
                  </tbody>
                </Table>
              </FrameBody>
              <Scroll thumb={27} open />
            </Frame>
          </Dock>
        </RightColumn>
      </Workspace>
      <StatusBar />
    </Page>
  );
}
